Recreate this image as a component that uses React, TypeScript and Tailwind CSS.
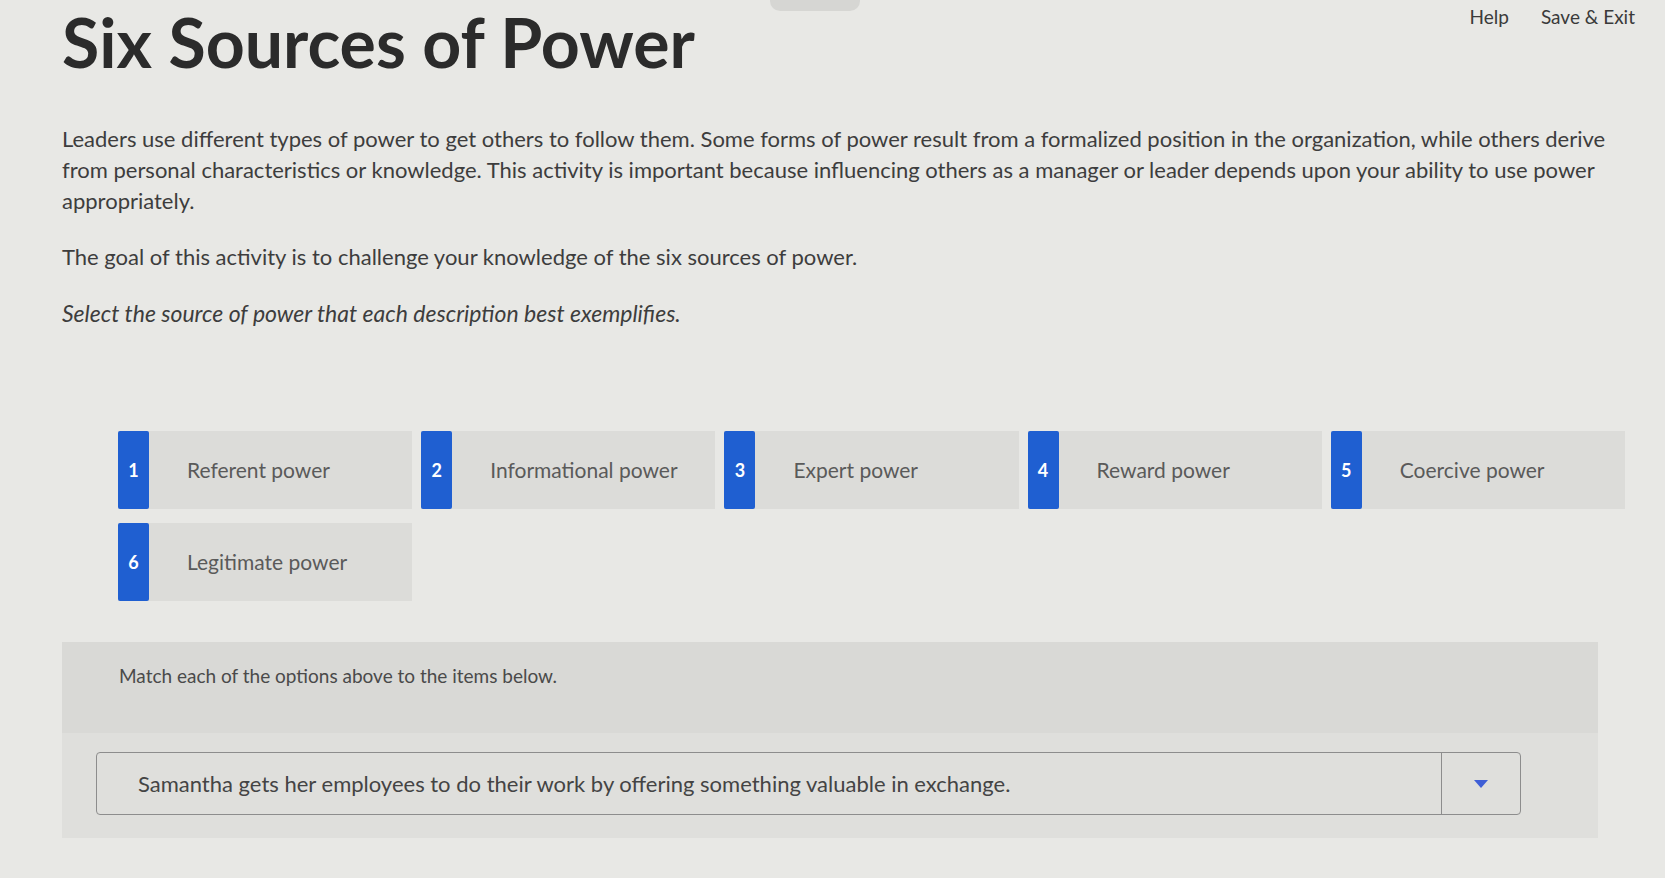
/** Six Sources of Power – matching activity page */
import { useState } from 'react'

const options = [
  { n: 1, label: 'Referent power' },
  { n: 2, label: 'Informational power' },
  { n: 3, label: 'Expert power' },
  { n: 4, label: 'Reward power' },
  { n: 5, label: 'Coercive power' },
  { n: 6, label: 'Legitimate power' },
]

function OptionCard({ n, label }: { n: number; label: string }) {
  return (
    <div className="flex h-[78px] bg-[#dcdcd9]">
      <div className="flex w-[31px] flex-shrink-0 items-center justify-center rounded-[2px] bg-[#1f5fd1]">
        <span className="text-[18px] font-bold text-white">{n}</span>
      </div>
      <div className="flex items-center pl-[38px] text-[21px] text-[#5a5a5a]">{label}</div>
    </div>
  )
}

export default function App() {
  const [open, setOpen] = useState(false)

  return (
    <div
      className="relative h-[878px] w-full overflow-hidden bg-[#e8e8e5]"
      style={{ fontFamily: "Lato, 'Open Sans', sans-serif" }}
    >
      {/* 上方懸掛的小頁籤 */}
      <div className="absolute left-[770px] top-0 h-[11px] w-[90px] rounded-b-[10px] bg-[#d6d6d3]" />

      {/* Header：標題 + 右側連結 */}
      <header className="flex items-start justify-between">
        <h1 className="pl-[62px] pt-[2px] text-[68px] font-bold leading-[80px] text-[#2b2b2b]">
          Six Sources of Power
        </h1>
        <nav className="flex items-center gap-[32px] pr-[30px] pt-[3px] text-[19px] text-[#3a3a3a]">
          <button type="button">Help</button>
          <button type="button">Save &amp; Exit</button>
        </nav>
      </header>

      <main className="pl-[62px] pr-[10px]">
        <p className="mt-[41px] max-w-[1585px] text-[22px] leading-[31px] text-[#3d3d3d]">
          Leaders use different types of power to get others to follow them. Some forms of power result from a
          formalized position in the organization, while others derive from personal characteristics or
          knowledge. This activity is important because influencing others as a manager or leader depends upon
          your ability to use power appropriately.
        </p>
        <p className="mt-[25px] text-[22px] leading-[31px] text-[#3d3d3d]">
          The goal of this activity is to challenge your knowledge of the six sources of power.
        </p>
        <p className="mt-[26px] text-[23px] italic leading-[31px] text-[#3d3d3d]">
          Select the source of power that each description best exemplifies.
        </p>

        {/* 選項卡片 */}
        <div className="ml-[56px] mt-[102px] grid w-[1507px] grid-cols-5 gap-x-[9px] gap-y-[14px]">
          {options.map((o) => (
            <OptionCard key={o.n} n={o.n} label={o.label} />
          ))}
        </div>

        {/* 配對區 */}
        <section className="mt-[41px] w-[1536px] bg-[#dfdfdc] pb-[23px]">
          <div className="bg-[#d9d9d6] px-[57px] pb-[46px] pt-[22px] text-[19px] leading-[23px] text-[#4a4a4a]">
            Match each of the options above to the items below.
          </div>
          <div className="px-[34px] pt-[19px]">
            <button
              type="button"
              onClick={() => setOpen((v) => !v)}
              className="flex h-[63px] w-[1425px] items-stretch rounded-[4px] border border-[#8d8d8d] text-left"
            >
              <span className="flex flex-1 items-center pl-[41px] text-[22px] text-[#444444]">
                Samantha gets her employees to do their work by offering something valuable in exchange.
              </span>
              <span className="flex w-[79px] items-center justify-center border-l border-[#8d8d8d]">
                <svg width="14" height="8" viewBox="0 0 14 8" className={open ? 'rotate-180' : ''}>
                  <path d="M0 0 H14 L7 8 Z" fill="#3f5fd6" />
                </svg>
              </span>
            </button>
          </div>
        </section>
      </main>
    </div>
  )
}
